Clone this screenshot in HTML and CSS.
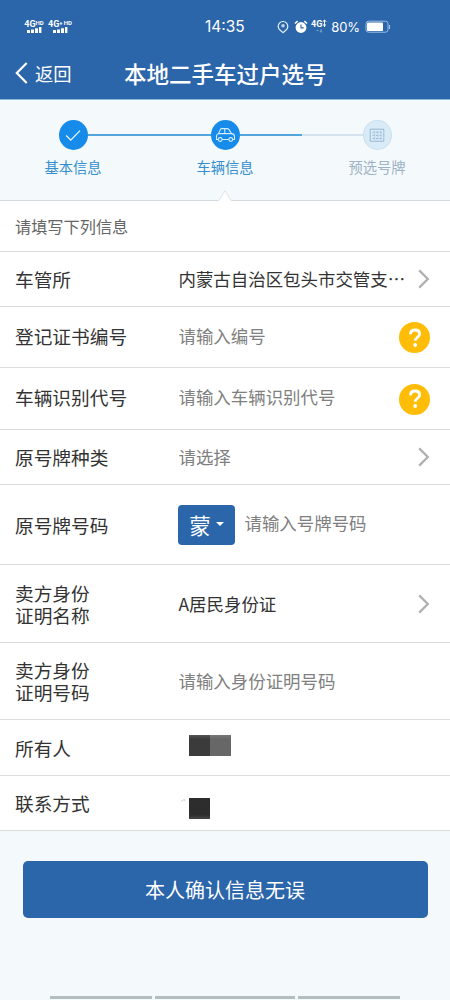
FILE: index.html
```html
<!DOCTYPE html>
<html lang="zh-CN">
<head>
<meta charset="utf-8">
<title>本地二手车过户选号</title>
<link rel="stylesheet" href="styles.css">
</head>
<body>
<header class="header">
  <div class="status">
    <div class="signals">
      <div class="signal"><span class="net">4G<small>HD</small></span>
        <svg width="16" height="6" viewBox="0 0 16 6"><path d="M1 3h3v3H1zM5 2.4h3V6H5zM9 1.3h3V6H9zM13 0h2.4v6H13z" fill="#fff"/></svg></div>
      <div class="signal signal-plus"><span class="net">4G<small>+&#8201;HD</small></span>
        <svg width="16" height="6" viewBox="0 0 16 6"><path d="M1 3h3v3H1zM5 2.4h3V6H5zM9 1.3h3V6H9zM13 0h2.4v6H13z" fill="#fff"/></svg></div>
    </div>
    <span class="clock">14:35</span>
    <div class="tray">
      <svg class="pin" width="12" height="14" viewBox="0 0 12 14" fill="none" stroke="#e4f1ff"><path d="M6 12.6 3.2 10.2A4.8 4.8 0 1 1 8.8 10.2Z" stroke-width="1.2"/><circle cx="6" cy="5.8" r="1.8" fill="#b9d3ee" stroke="none"/></svg>
      <svg class="alarm" width="14" height="14" viewBox="0 0 14 14"><circle cx="7" cy="7.5" r="5.4" fill="#fff"/><path d="M1 3.5 3.6 1.2M13 3.5 10.4 1.2" stroke="#fff" stroke-width="1.6"/><path d="M7 4.4v3.5h2.6" fill="none" stroke="#2b65aa" stroke-width="1.1"/></svg>
      <div class="data"><span class="data-text">4G</span><svg width="5" height="9" viewBox="0 0 5 9" fill="none" stroke="#fff"><path d="M2.5 8V1M.7 2.8 2.5 1l1.8 1.8M1 6h3"/></svg><svg class="traffic" width="7" height="4" viewBox="0 0 7 4" fill="none" stroke="#79a3d3"><path d="M.5 1.5h2M5 0v3.2M3.8 2 5 3.3 6.2 2"/></svg></div>
      <span class="percent">80%</span>
      <svg width="26" height="14" viewBox="0 0 26 14"><rect x="1" y="1.2" width="22" height="11" rx="2.5" fill="none" stroke="#9dbfe4"/><rect x="2" y="2.5" width="16" height="8.5" rx="1" fill="#fff"/><path d="M24.5 5v4" stroke="#9dbfe4" stroke-width="1.2"/></svg>
    </div>
  </div>
  <div class="nav">
    <div class="back"><svg width="13" height="22" viewBox="0 0 13 22" fill="none" stroke="#fff" stroke-width="2.2"><path d="M11.7 1 1.8 11l9.9 10"/></svg><span>返回</span></div>
    <h1 class="title">本地二手车过户选号</h1>
  </div>
</header>

<section class="steps">
  <div class="track">
    <span class="dot"><svg width="16" height="13" viewBox="0 0 16 13" fill="none" stroke="#e8f7ff" stroke-width="1.3"><path d="m1.2 6.5 4.6 4.6L15 1.6"/></svg></span>
    <span class="line line-full"></span>
    <span class="dot"><svg width="21" height="16" viewBox="0 0 21 16" fill="none" stroke="#d3ecff" stroke-width="1.1"><path d="M3.2 12.5H1.5V9c0-1.3.7-2 2-2.3L5.3 2.6C5.6 1.9 6 1.6 6.8 1.6h5.4c.8 0 1.3.3 1.8 1l2.5 4c1.9.2 3 1 3 2.8v3.1h-1.8M7 12.5h7M3.7 6.6h12.6M9.8 1.8v4.8"/><circle cx="5.2" cy="12.5" r="1.9"/><circle cx="15.8" cy="12.5" r="1.9"/></svg></span>
    <span class="line line-half"></span>
    <span class="dot dot-next"><svg width="16" height="15" viewBox="0 0 16 15" fill="none" stroke="#94b7d2"><path d="M1.2 1.2h13.6v3.2M14.8 10v3.2H1.2V1.2M14.8 5v4.5"/><path d="M3.5 4.2h9.2M3.5 7.3h9.2M3.5 10.4h9.2" stroke-dasharray="2 1.5"/><path d="M5.7 2.8v9M9 2.8v9M12 2.8v9" stroke-width=".5"/></svg></span>
  </div>
  <div class="captions"><span>基本信息</span><span>车辆信息</span><span class="muted">预选号牌</span></div>
  <svg class="notch" width="14" height="11" viewBox="0 0 14 11"><path d="M.5 11 7 .8 13.5 11" fill="#fff" stroke="#dde3e6"/></svg>
</section>

<main class="form">
  <div class="intro">请填写下列信息</div>
  <div class="row r55"><span class="label">车管所</span><span class="value">内蒙古自治区包头市交管支<span class="dots">⋯</span></span><svg class="arrow" width="12" height="20" viewBox="0 0 12 20"><path d="m1.2 1.4 8.6 8.6-8.6 8.6"/></svg></div>
  <div class="row r61"><span class="label">登记证书编号</span><span class="value hint">请输入编号</span><span class="help"><svg width="14" height="20" viewBox="0 0 14 20"><path d="M2.4 6.4C2.5 3.6 4.3 2 7 2s4.6 1.5 4.6 3.9c0 3.2-4.3 3.5-4.3 6.9"/><circle cx="7.2" cy="17" r="1.9"/></svg></span></div>
  <div class="row r62"><span class="label">车辆识别代号</span><span class="value hint">请输入车辆识别代号</span><span class="help"><svg width="14" height="20" viewBox="0 0 14 20"><path d="M2.4 6.4C2.5 3.6 4.3 2 7 2s4.6 1.5 4.6 3.9c0 3.2-4.3 3.5-4.3 6.9"/><circle cx="7.2" cy="17" r="1.9"/></svg></span></div>
  <div class="row r55"><span class="label">原号牌种类</span><span class="value hint">请选择</span><svg class="arrow" width="12" height="20" viewBox="0 0 12 20"><path d="m1.2 1.4 8.6 8.6-8.6 8.6"/></svg></div>
  <div class="row r80"><span class="label">原号牌号码</span><span class="province"><span class="province-name">蒙</span><i class="caret"></i></span><span class="value hint plate">请输入号牌号码</span></div>
  <div class="row r78"><span class="label">卖方身份<br>证明名称</span><span class="value">A居民身份证</span><svg class="arrow" width="12" height="20" viewBox="0 0 12 20"><path d="m1.2 1.4 8.6 8.6-8.6 8.6"/></svg></div>
  <div class="row r77"><span class="label">卖方身份<br>证明号码</span><span class="value hint">请输入身份证明号码</span></div>
  <div class="row r56"><span class="label">所有人</span><span class="mask"><i class="block dark"></i><i class="block grey"></i></span></div>
  <div class="row r55"><span class="label">联系方式</span><span class="mask mask-phone"><svg width="10" height="5" viewBox="0 0 10 5"><path d="M2 3.5 5.5 1.2V3" fill="none" stroke="#d5d5d5"/></svg><i class="block black"></i></span></div>
</main>

<button class="submit">本人确认信息无误</button>

<div class="gesture"><span class="bar side"></span><span class="bar mid"></span><span class="bar side"></span></div>
</body>
</html>
```
FILE: styles.css
```css
* { box-sizing: border-box; }
body {
  margin: 0;
  width: 450px;
  height: 1000px;
  overflow: hidden;
  display: flex;
  flex-direction: column;
  background: #f4f9fb;
  color: #333;
  font-family: "Noto Sans CJK SC", "Noto Sans", sans-serif;
}
svg { display: block; flex: none; }
.header { height: 100px; background: #2b65aa; color: #fff; border-bottom: 1px solid #8db9df; }
.status {
  height: 50px;
  padding: 3px 59px 0 24px;
  display: grid;
  grid-template-columns: 181px 72px 1fr;
  align-items: center;
}
.signals { display: flex; gap: 4px; }
.signal { width: 20px; display: flex; flex-direction: column; align-items: center; font-family: Roboto, sans-serif; }
.signal-plus { width: 24px; }
.net { font-size: 9px; line-height: 8px; height: 7px; font-weight: 700; white-space: nowrap; display: flex; }
.net small { font-size: 6px; line-height: 5px; font-weight: 700; }
.clock { font: 15.5px/20px Inter, sans-serif; }
.tray { display: flex; align-items: center; }
.alarm { margin-left: 5px; }
.data { position: relative; display: flex; margin: -6px 0 0 3px; align-items: center; }
.traffic { position: absolute; left: 5px; top: 10px; }
.data-text { font: 700 9px/10px Roboto, sans-serif; }
.percent { font: 13px/18px Inter, sans-serif; letter-spacing: -.2px; margin: 0 5px 0 4px; }
.nav { height: 48px; display: grid; grid-template-columns: 109px 1fr; align-items: center; padding: 0 0 2px 15px; }
.back { display: flex; align-items: center; gap: 7px; font-size: 18.3px; line-height: 24px; }
.title { margin: 0; font-size: 22.5px; line-height: 30px; font-weight: 500; }

.steps { position: relative; height: 101px; padding-top: 20px; border-bottom: 1px solid #d4d9dd; }
.track { display: flex; align-items: center; justify-content: center; height: 30px; }
.dot { width: 29px; height: 30px; border-radius: 50%; background: #168be9; display: flex; align-items: center; justify-content: center; }
.dot-next { background: #daebf8; border: 1px solid #c9dfef; }
.line { width: 123px; height: 2px; }
.line-full { background: #53a6dc; }
.line-half { background: linear-gradient(90deg, #53a6dc 50%, #d5e4ee 50%); }
.captions { display: flex; justify-content: center; font-size: 14.3px; line-height: 20px; margin-top: 7px; color: #348fcf; }
.captions span { flex: none; width: 152px; text-align: center; }
.captions .muted { color: #9db2c5; }
.notch { position: absolute; left: 218px; bottom: -1px; }

.form { background: #fff; }
.intro { height: 51px; padding-left: 15px; font-size: 16.2px; line-height: 50px; color: #666; border-bottom: 1px solid #dcdcdc; }
.row { display: flex; align-items: center; padding: 0 20px 0 15px; border-bottom: 1px solid #dcdcdc; }
.r55 { height: 55px; }
.r56 { height: 56px; }
.r61 { height: 61px; }
.r62 { height: 62px; }
.r77 { height: 77px; }
.r78 { height: 78px; }
.r80 { height: 80px; }
.label { width: 163.5px; flex: none; font-size: 18.7px; line-height: 22px; }
.value { flex: 1; font-size: 17.45px; line-height: 24px; white-space: nowrap; }
.r61 .label, .r61 .value, .r62 .label, .r62 .value { padding-bottom: 3px; }
.hint { color: #808080; }
.arrow { fill: none; stroke: #b0b0b0; stroke-width: 2.3; }
.help { width: 31px; height: 31px; margin-top: 1px; border-radius: 50%; background: #ffbd08; display: flex; align-items: center; justify-content: center; }
.help path { fill: none; stroke: #fff; stroke-width: 2.8; }
.help circle { fill: #fff; }
.r80 .label { width: 163px; }
.province { width: 57px; height: 40px; border-radius: 4px; background: #2b65aa; color: #fff; font-size: 21.5px; line-height: 40px; display: flex; align-items: center; justify-content: center; gap: 5px; }
.caret { border: 4px solid transparent; border-top-color: #fff; border-bottom: 0; margin-top: -1px; }
.plate { margin-left: 9.5px; padding-bottom: 3px; }
.mask { display: flex; margin: -5px 0 0 10px; }
.mask-phone { margin: 10px 0 0; }
.block { width: 21px; height: 21px; }
.dark { background: linear-gradient(#555, #3b3b3b 20%); }
.grey { background: linear-gradient(#777, #676767 20%); }
.black { background: linear-gradient(#2d2d2d 80%, #484848); }

.submit {
  width: 405px;
  height: 57px;
  margin: 30px auto 0;
  padding: 0;
  border: 0;
  border-radius: 5px;
  background: #2b65aa;
  color: #fff;
  font-family: inherit;
  font-size: 20px;
}
.gesture { display: flex; justify-content: center; gap: 3px; margin: auto 0 1px; }
.bar { height: 3px; background: #b5bebf; }
.side { width: 102px; }
.mid { width: 140px; }
```
